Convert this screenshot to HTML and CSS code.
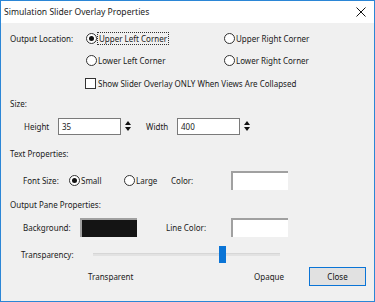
FILE: index.html
```html
<!DOCTYPE html>
<html lang="en">
<head>
  <meta charset="UTF-8">
  <title>Simulation Slider Overlay Properties</title>
  <link rel="stylesheet" href="styles.css">
</head>
<body>
  <div class="window">
    <!-- Title Bar -->
    <div class="titlebar">
      <span class="title">Simulation Slider Overlay Properties</span>
      <span class="close-x">
        <svg width="10" height="10" viewBox="0 0 10 10"><path d="M0.5 0.5 L9.5 9.5 M9.5 0.5 L0.5 9.5" stroke="#111" stroke-width="1" fill="none"/></svg>
      </span>
    </div>

    <div class="content">
      <!-- Output Location -->
      <div class="row row-loc1">
        <span class="label loc-label">Output Location:</span>
        <label class="radio col-a"><span class="dot checked"></span><span class="focus">Upper Left Corner</span></label>
        <label class="radio"><span class="dot"></span>Upper Right Corner</label>
      </div>
      <div class="row row-loc2">
        <label class="radio col-a"><span class="dot"></span>Lower Left Corner</label>
        <label class="radio"><span class="dot"></span>Lower Right Corner</label>
      </div>
      <div class="row row-check">
        <label class="check"><span class="box"></span>Show Slider Overlay ONLY When Views Are Collapsed</label>
      </div>

      <!-- Size -->
      <div class="row section row-size">Size:</div>
      <div class="row row-dims">
        <span class="label height-label">Height</span>
        <span class="num">35</span>
        <span class="spin"><i class="up"></i><i class="down"></i></span>
        <span class="label width-label">Width</span>
        <span class="num">400</span>
        <span class="spin"><i class="up"></i><i class="down"></i></span>
      </div>

      <!-- Text Properties -->
      <div class="row section row-text">Text Properties:</div>
      <div class="row row-font">
        <span class="label font-label">Font Size:</span>
        <label class="radio small-radio"><span class="dot checked"></span>Small</label>
        <label class="radio large-radio"><span class="dot"></span>Large</label>
        <span class="label color-label">Color:</span>
        <span class="swatch"></span>
      </div>

      <!-- Output Pane Properties -->
      <div class="row section row-pane">Output Pane Properties:</div>
      <div class="row row-bg">
        <span class="label bg-label">Background:</span>
        <span class="swatch dark"></span>
        <span class="label line-label">Line Color:</span>
        <span class="swatch"></span>
      </div>
      <div class="row row-trans">
        <span class="label trans-label">Transparency:</span>
        <div class="slider">
          <div class="track"></div>
          <div class="thumb" style="left: 126px;"></div>
        </div>
      </div>
      <div class="row row-bottom">
        <span class="end-label transparent">Transparent</span>
        <span class="end-label opaque">Opaque</span>
        <button class="close-btn">Close</button>
      </div>
    </div>
  </div>
</body>
</html>
```

FILE: styles.css
```css
/* General Styles */
html, body {
  margin: 0;
  padding: 0;
}

body {
  font-family: "Noto Sans", "Open Sans", sans-serif;
  font-size: 8px;
  color: #1a1a1a;
  background: #fff;
}

.window {
  width: 375px;
  height: 302px;
  box-sizing: border-box;
  border: 1px solid #2b86d6;
  display: flex;
  flex-direction: column;
}

/* Title Bar */
.titlebar {
  height: 22px;
  display: flex;
  align-items: center;
  justify-content: space-between;
  padding: 0 7px 0 3px;
  background: #fff;
  font-size: 8.6px;
}

.close-x {
  display: flex;
  margin-right: 1px;
}

.content {
  flex: 1;
  background: #f0f0f0;
  padding: 5px 0 0 9px;
}

/* Rows */
.row {
  height: 20px;
  display: flex;
  align-items: center;
  white-space: nowrap;
}

.row-loc2 { margin-top: 2px; padding-left: 76px; }
.row-check { margin-top: 3px; padding-left: 75px; }
.row-size { margin-top: 0; }
.row-dims { margin-top: 3px; padding-left: 14px; }
.row-text { margin-top: 7px; }
.row-font { margin-top: 7px; padding-left: 13px; }
.row-pane { margin-top: 4px; }
.row-bg { margin-top: 3px; padding-left: 13px; }
.row-trans { margin-top: 7px; padding-left: 11px; }
.row-bottom { margin-top: 3px; position: relative; }

.loc-label { width: 76px; }
.col-a { width: 138px; }

/* Radios & Checkbox */
.radio, .check {
  display: flex;
  align-items: center;
}

.dot {
  width: 9px;
  height: 9px;
  border: 1px solid #333;
  border-radius: 50%;
  background: #fff;
  margin-right: 1px;
  position: relative;
}

.dot.checked::after {
  content: "";
  position: absolute;
  left: 2px;
  top: 2px;
  width: 5px;
  height: 5px;
  border-radius: 50%;
  background: #111;
}

.focus {
  outline: 1px dotted #333;
  outline-offset: 0;
  padding: 0 1px;
}

.box {
  width: 9px;
  height: 9px;
  border: 1px solid #333;
  background: #fff;
  margin-right: 2px;
}

/* Size inputs */
.height-label { width: 34px; }
.width-label { width: 31px; margin-left: 15px; }

.num {
  width: 58px;
  height: 15px;
  line-height: 15px;
  padding-left: 3px;
  border: 1px solid #7a7a7a;
  background: #fff;
}

.spin {
  display: flex;
  flex-direction: column;
  gap: 2px;
  margin-left: 4px;
}

.spin i {
  width: 0;
  height: 0;
  border-left: 3px solid transparent;
  border-right: 3px solid transparent;
}

.spin .up { border-bottom: 4px solid #111; }
.spin .down { border-top: 4px solid #111; }

/* Font row */
.font-label { width: 46px; }
.small-radio { width: 55px; }
.large-radio { width: 47px; }
.color-label { width: 60px; }

.swatch {
  width: 55px;
  height: 17px;
  background: #fff;
  border-top: 2px solid #a0a0a0;
  border-left: 2px solid #a0a0a0;
}

.swatch.dark {
  background: #141414;
}

.bg-label { width: 57px; }
.line-label { width: 65px; margin-left: 29px; }

/* Slider */
.trans-label { width: 72px; }

.slider {
  position: relative;
  width: 187px;
  height: 20px;
}

.track {
  position: absolute;
  left: 0;
  right: 0;
  top: 9px;
  height: 2px;
  background: #e2e2e2;
  border-top: 1px solid #d6d6d6;
}

.thumb {
  position: absolute;
  top: 2px;
  width: 7px;
  height: 17px;
  background: #0a74d6;
}

/* Bottom */
.end-label {
  position: absolute;
  top: 4px;
}

.transparent { left: 78px; }
.opaque { left: 244px; }

.close-btn {
  position: absolute;
  left: 299px;
  top: 0;
  width: 57px;
  height: 19px;
  border: 1px solid #0a74d6;
  background: #e1e1e1;
  font-family: inherit;
  font-size: 8px;
  color: #111;
  padding: 0;
}
```
